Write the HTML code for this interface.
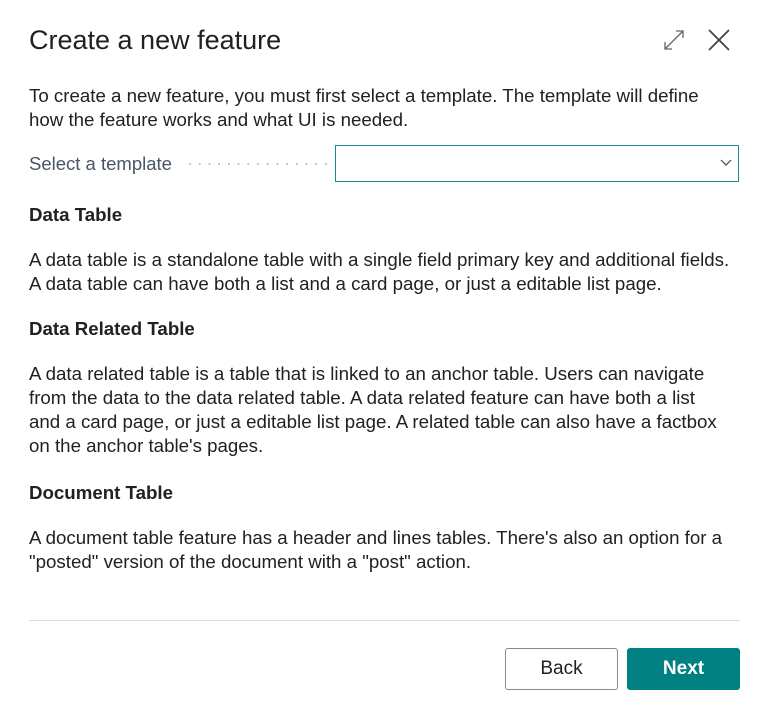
<!DOCTYPE html>
<html><head><style>
body{margin:0;width:768px;height:720px;background:#fff;font-family:"Liberation Sans",sans-serif;color:#212121;position:relative;overflow:hidden}
.a{position:absolute;white-space:nowrap}
.t{font-size:18.7px;line-height:24px;left:29px}
.h{font-size:18.7px;font-weight:bold;left:29px;line-height:24px}
</style></head><body>
<div class="a" style="left:29px;top:24px;font-size:27px;line-height:32px">Create a new feature</div>
<svg class="a" style="left:662px;top:26px" width="80" height="28" viewBox="0 0 80 28">
<path d="M3 23 L21 5 M14 5 H21 V12 M3 16 V23 H10" stroke="#666" stroke-width="1.3" fill="none"/>
<path d="M47 4 L67 24 M67 4 L47 24" stroke="#444" stroke-width="1.8" fill="none"/>
</svg>
<div class="a t" style="top:84px">To create a new feature, you must first select a template. The template will define</div>
<div class="a t" style="top:108px">how the feature works and what UI is needed.</div>
<div class="a" style="left:29px;top:152px;font-size:18.5px;line-height:24px;color:#4a5566">Select a template</div>
<svg class="a" style="left:188px;top:162px" width="140" height="4"><line x1="2" y1="2" x2="138" y2="2" stroke="#bbb" stroke-width="2" stroke-dasharray="0.1 9.6" stroke-linecap="round"/></svg>
<div class="a" style="left:335px;top:145px;width:402px;height:35px;border:1px solid #1e8a8a"></div>
<svg class="a" style="left:720px;top:158px" width="12" height="10"><path d="M1 2 L6 7 L11 2" stroke="#444" fill="none" stroke-width="1.2"/></svg>
<div class="a h" style="top:203px">Data Table</div>
<div class="a t" style="top:248px">A data table is a standalone table with a single field primary key and additional fields.</div>
<div class="a t" style="top:272px">A data table can have both a list and a card page, or just a editable list page.</div>
<div class="a h" style="top:317px">Data Related Table</div>
<div class="a t" style="top:362px">A data related table is a table that is linked to an anchor table. Users can navigate</div>
<div class="a t" style="top:386px">from the data to the data related table. A data related feature can have both a list</div>
<div class="a t" style="top:410px">and a card page, or just a editable list page. A related table can also have a factbox</div>
<div class="a t" style="top:434px">on the anchor table's pages.</div>
<div class="a h" style="top:481px">Document Table</div>
<div class="a t" style="top:526px">A document table feature has a header and lines tables. There's also an option for a</div>
<div class="a t" style="top:550px">"posted" version of the document with a "post" action.</div>
<div class="a" style="left:29px;top:620px;width:711px;border-top:1px solid #ddd"></div>
<div class="a" style="left:505px;top:648px;width:111px;height:40px;border:1px solid #8a8a8a;border-radius:3px;font-size:19px;line-height:40px;text-align:center">Back</div>
<div class="a" style="left:627px;top:648px;width:113px;height:42px;background:#008080;border-radius:3px;color:#fff;font-size:19px;font-weight:bold;line-height:42px;text-align:center">Next</div>
</body></html>
